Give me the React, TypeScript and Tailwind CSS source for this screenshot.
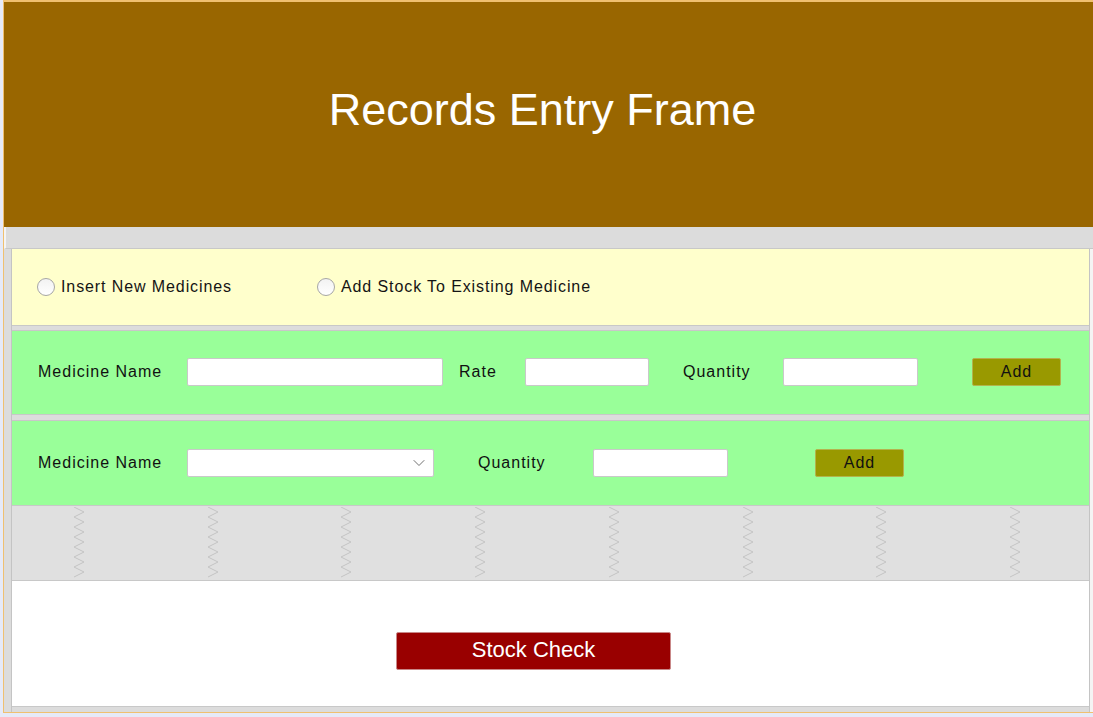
import { ChevronDown } from "lucide-react"

const font = { fontFamily: '"Liberation Sans", Arial, sans-serif' }

function Radio({ label }: { label: string }) {
  return (
    <label className="flex items-center">
      <span className="w-[18px] h-[18px] rounded-full border border-[#a6a6a6] bg-gradient-to-b from-[#f2f2f2] to-white" />
      <span className="ml-[6px] text-[16px] tracking-[0.9px] text-[#141414]">{label}</span>
    </label>
  )
}

function TextBox({ w }: { w: string }) {
  return <div className={`${w} h-[28px] bg-white border border-[#c9c9c9] rounded-[2px]`} />
}

function AddButton() {
  return (
    <button className="w-[89px] h-[28px] bg-[#999900] border border-[#b3b34d] rounded-[2px] text-[16px] tracking-[1px] text-[#111]">
      Add
    </button>
  )
}

function Zigzag() {
  const pts: string[] = []
  for (let i = 0; i <= 14; i++) {
    pts.push(`${i % 2 === 0 ? 1 : 11},${i * 5}`)
  }
  return (
    <svg width="12" height="72" viewBox="0 0 12 72">
      <polyline points={pts.join(" ")} fill="none" stroke="#c4c4c4" strokeWidth="1" />
    </svg>
  )
}

export default function App() {
  return (
    <div className="w-[1093px] h-[717px] bg-[#e6eaf8] overflow-hidden" style={font}>
      <div className="ml-[3px] h-[713px] border-l border-t-2 border-b border-[#f0c070] flex flex-col">
        {/* Header */}
        <div className="h-[225px] bg-[#996600] flex items-center justify-center">
          <h1 className="text-[45px] text-white pr-[12px] -mt-[10px]">Records Entry Frame</h1>
        </div>
        <div className="h-[22px] bg-[#dcdcdc] border-l-2 border-l-[#f4f4f4] border-b border-b-[#c8c8c8]" />

        {/* Body */}
        <div className="flex flex-1">
          <div className="w-[8px] bg-[#dcdcdc] border-r border-[#c4c4c4]" />
          <div className="flex-1 flex flex-col bg-white">
            {/* Choice */}
            <div className="h-[76px] bg-[#ffffcc] flex items-center pl-[25px]">
              <div className="w-[280px]">
                <Radio label="Insert New Medicines" />
              </div>
              <Radio label="Add Stock To Existing Medicine" />
            </div>
            <div className="h-[6px] bg-[#dcdcdc] border-y border-[#c8c8c8]" />

            {/* New medicine */}
            <div className="h-[83px] bg-[#99ff99] flex items-center pl-[26px] pb-[1px] text-[16px] tracking-[1px] text-[#111]">
              <span className="w-[149px]">Medicine Name</span>
              <TextBox w="w-[256px]" />
              <span className="ml-[16px] w-[66px]">Rate</span>
              <TextBox w="w-[124px]" />
              <span className="ml-[34px] w-[100px]">Quantity</span>
              <TextBox w="w-[135px]" />
              <div className="ml-[54px]">
                <AddButton />
              </div>
            </div>
            <div className="h-[7px] bg-[#dcdcdc] border-y border-[#c8c8c8]" />

            {/* Existing medicine */}
            <div className="h-[84px] bg-[#99ff99] flex items-center pl-[26px] pb-[1px] text-[16px] tracking-[1px] text-[#111]">
              <span className="w-[149px]">Medicine Name</span>
              <div className="w-[247px] h-[28px] bg-white border border-[#c9c9c9] rounded-[2px] flex items-center justify-end pr-[4px]">
                <ChevronDown size={20} strokeWidth={1.2} className="text-[#707070]" />
              </div>
              <span className="ml-[44px] w-[115px]">Quantity</span>
              <TextBox w="w-[135px]" />
              <div className="ml-[87px]">
                <AddButton />
              </div>
            </div>

            {/* Split dividers */}
            <div className="h-[76px] bg-[#e0e0e0] border-y border-[#c8c8c8] flex items-center">
              <div className="w-[1070px] grid grid-cols-8">
                {Array.from({ length: 8 }).map((_, i) => (
                  <div key={i} className="flex justify-center">
                    <Zigzag />
                  </div>
                ))}
              </div>
            </div>

            {/* Stock check */}
            <div className="flex-1 pt-[51px] pl-[384px]">
              <button className="w-[275px] h-[38px] bg-[#990000] border border-[#c98888] rounded-[2px] text-white text-[22px] pb-[3px]">
                Stock Check
              </button>
            </div>
            <div className="h-[6px] bg-[#dcdcdc] border-t border-[#c8c8c8]" />
          </div>
          <div className="w-[4px] bg-[#f4f4f4] border-l border-[#c4c4c4]" />
        </div>
      </div>
    </div>
  )
}
